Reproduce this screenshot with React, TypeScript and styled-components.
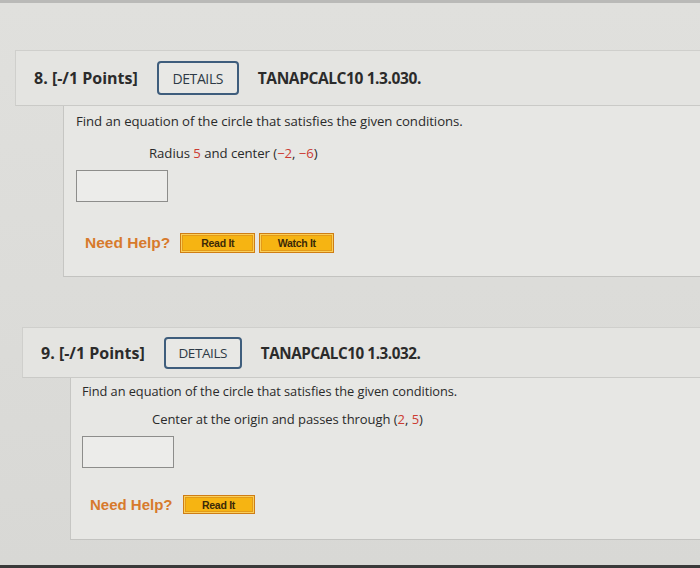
import React from 'react'
import styled, { createGlobalStyle } from 'styled-components'

const GlobalStyle = createGlobalStyle`
  html, body {
    margin: 0;
    padding: 0;
    background: #dadad7;
  }
  body {
    font-family: 'Open Sans', sans-serif;
    color: #2a2a2a;
  }
`

const Red = styled.span`
  color: #cc3b32;
`

type Question = {
  num: number
  code: string
  condition: React.ReactNode
  watch: boolean
  shift: number
}

const questions: Question[] = [
  {
    num: 8,
    code: 'TANAPCALC10 1.3.030.',
    condition: (
      <>
        Radius <Red>5</Red> and center (<Red>−2</Red>, <Red>−6</Red>)
      </>
    ),
    watch: true,
    shift: 15,
  },
  {
    num: 9,
    code: 'TANAPCALC10 1.3.032.',
    condition: (
      <>
        Center at the origin and passes through (<Red>2</Red>, <Red>5</Red>)
      </>
    ),
    watch: false,
    shift: 22,
  },
]

export default function App() {
  return (
    <>
      <GlobalStyle />
      <Page>
        {questions.map(q => {
          const compact = q.num === 9
          return (
            <Card key={q.num} $shift={q.shift}>
              <Header $compact={compact}>
                <Points>{q.num}. [-/1 Points]</Points>
                <DetailsBtn $compact={compact}>DETAILS</DetailsBtn>
                <Code $compact={compact}>{q.code}</Code>
              </Header>
              <Body $compact={compact}>
                <Prompt $compact={compact}>
                  Find an equation of the circle that satisfies the given conditions.
                </Prompt>
                <Condition $compact={compact}>{q.condition}</Condition>
                <AnswerBox />
                <HelpRow $compact={compact}>
                  <HelpLabel $compact={compact}>Need Help?</HelpLabel>
                  <HelpBtn $compact={compact}>Read It</HelpBtn>
                  {q.watch && <HelpBtn $compact={compact}>Watch It</HelpBtn>}
                </HelpRow>
              </Body>
            </Card>
          )
        })}
      </Page>
    </>
  )
}

const Page = styled.div`
  width: 700px;
  height: 568px;
  box-sizing: border-box;
  border-top: 3px solid #b9b9b7;
  border-bottom: 3px solid #3a3a3a;
  padding-top: 47px;
  display: flex;
  flex-direction: column;
  gap: 50px;
  overflow: hidden;
  background: linear-gradient(180deg, #e0e0dd 0%, #d8d8d5 100%);
`

const Card = styled.section<{ $shift: number }>`
  margin-left: ${p => p.$shift}px;
  display: flex;
  flex-direction: column;
`

const Header = styled.div<{ $compact: boolean }>`
  height: ${p => (p.$compact ? 51 : 56)}px;
  box-sizing: border-box;
  background: #e4e4e1;
  border-top: 1px solid #cfcfcc;
  border-left: 1px solid #cfcfcc;
  border-bottom: 1px solid #cacac7;
  padding-left: 18px;
  display: flex;
  align-items: center;
  gap: 19px;
`

const Points = styled.span`
  font-weight: 700;
  font-size: 16px;
  color: #2b2b2b;
`

const DetailsBtn = styled.button<{ $compact: boolean }>`
  width: ${p => (p.$compact ? 78 : 82)}px;
  height: ${p => (p.$compact ? 32 : 34)}px;
  border: 2px solid #3e5d7c;
  border-radius: 4px;
  background: #e8e8e5;
  font-family: 'Open Sans', sans-serif;
  font-size: ${p => (p.$compact ? 13.5 : 14)}px;
  letter-spacing: -0.4px;
  color: #2e3a46;
  padding: 0;
`

const Code = styled.span<{ $compact: boolean }>`
  font-weight: 700;
  font-size: ${p => (p.$compact ? 15.2 : 15.5)}px;
  letter-spacing: -0.4px;
  color: #2b2b2b;
`

const Body = styled.div<{ $compact: boolean }>`
  margin-left: 48px;
  height: ${p => (p.$compact ? 162 : 171)}px;
  box-sizing: border-box;
  background: #e7e7e4;
  border-left: 1px solid #c6c6c3;
  border-bottom: 1px solid #c3c3c0;
  padding: ${p => (p.$compact ? '3px 0 0 11px' : '5px 0 0 12px')};
  display: flex;
  flex-direction: column;
  align-items: flex-start;
`

const Prompt = styled.p<{ $compact: boolean }>`
  margin: 0;
  font-size: ${p => (p.$compact ? 12.8 : 13.2)}px;
  letter-spacing: -0.05px;
  line-height: 20px;
`

const Condition = styled.p<{ $compact: boolean }>`
  margin: ${p => (p.$compact ? '8px 0 0 70px' : '12px 0 0 73px')};
  font-size: ${p => (p.$compact ? 13 : 13.2)}px;
  letter-spacing: -0.05px;
  line-height: 20px;
`

const AnswerBox = styled.div`
  margin-top: 7px;
  width: 92px;
  height: 32px;
  box-sizing: border-box;
  background: #ececea;
  border: 1px solid #8d8d8b;
`

const HelpRow = styled.div<{ $compact: boolean }>`
  margin: ${p => (p.$compact ? '27px 0 0 8px' : '31px 0 0 9px')};
  display: flex;
  align-items: center;
  gap: 4px;
`

const HelpLabel = styled.span<{ $compact: boolean }>`
  font-family: 'Liberation Sans', Arial, sans-serif;
  font-weight: 700;
  font-size: ${p => (p.$compact ? 15 : 15.5)}px;
  color: #d77a2c;
  margin-right: 6px;
`

const HelpBtn = styled.button<{ $compact: boolean }>`
  width: ${p => (p.$compact ? 72 : 75)}px;
  height: ${p => (p.$compact ? 19 : 20)}px;
  box-sizing: border-box;
  padding: 0;
  background: #f6b412;
  border: 1px solid #cf7d14;
  box-shadow: inset 0 0 0 1px #f9cf5a, inset 0 0 0 2px #e39a18;
  font-family: 'Liberation Sans', sans-serif;
  font-weight: 700;
  font-size: 10.5px;
  letter-spacing: -0.3px;
  color: #3b2a08;
`
